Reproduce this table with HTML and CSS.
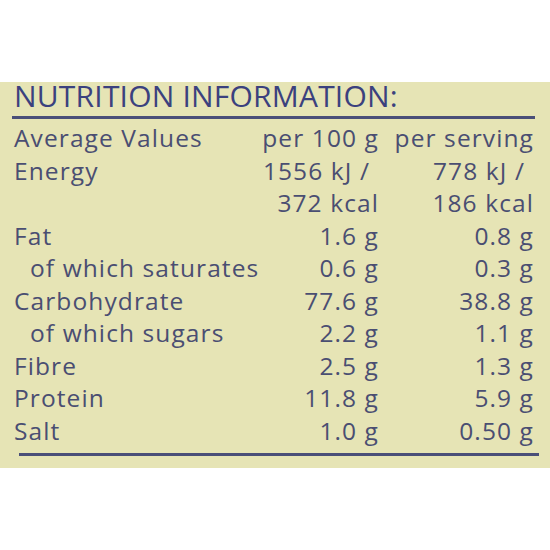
FILE: index.html
```html
<!DOCTYPE html>
<html lang="en">
<head>
  <meta charset="UTF-8"/>
  <title>Nutrition Information</title>
  <link rel="stylesheet" href="styles.css">
</head>
<body>

  <div class="panel">
    <h1 class="title">NUTRITION INFORMATION:</h1>
    <div class="rule top-rule"></div>

    <div class="facts">
      <div class="label">Average Values</div>
      <div class="value">per 100 g</div>
      <div class="value">per serving</div>

      <div class="label">Energy</div>
      <div class="value slash">1556 kJ /</div>
      <div class="value slash">778 kJ /</div>

      <div class="label"></div>
      <div class="value">372 kcal</div>
      <div class="value">186 kcal</div>

      <div class="label">Fat</div>
      <div class="value">1.6 g</div>
      <div class="value">0.8 g</div>

      <div class="label sub">of which saturates</div>
      <div class="value">0.6 g</div>
      <div class="value">0.3 g</div>

      <div class="label">Carbohydrate</div>
      <div class="value">77.6 g</div>
      <div class="value">38.8 g</div>

      <div class="label sub">of which sugars</div>
      <div class="value">2.2 g</div>
      <div class="value">1.1 g</div>

      <div class="label">Fibre</div>
      <div class="value">2.5 g</div>
      <div class="value">1.3 g</div>

      <div class="label">Protein</div>
      <div class="value">11.8 g</div>
      <div class="value">5.9 g</div>

      <div class="label">Salt</div>
      <div class="value">1.0 g</div>
      <div class="value">0.50 g</div>
    </div>

    <div class="rule bottom-rule"></div>
  </div>

</body>
</html>
```

FILE: styles.css
```css
body {
  margin: 0;
  background-color: #ffffff;
  font-family: 'Open Sans', sans-serif;
  color: #4a4e72;
}

.panel {
  margin-top: 82px;
  height: 386px;
  background-color: #e6e4b5;
  padding: 2px 14px 0 14px;
  box-sizing: border-box;
}

.title {
  margin: 0;
  font-size: 30px;
  font-weight: 500;
  line-height: 24px;
  color: #3b417e;
  letter-spacing: 0.2px;
  white-space: nowrap;
}

.rule {
  height: 3px;
  background-color: #4a4f78;
}

.top-rule {
  margin: 8px 1px 0 -2px;
}

.bottom-rule {
  margin: 6px -3px 0 5px;
}

.facts {
  display: grid;
  grid-template-columns: 230px 134px 155px;
  margin-top: 3px;
  font-size: 24.5px;
  line-height: 32.5px;
  letter-spacing: 1.1px;
}

.label {
  white-space: nowrap;
}

.label.sub {
  padding-left: 16px;
}

.value {
  text-align: right;
  white-space: nowrap;
  margin-right: -1px;
}

.value.slash {
  padding-right: 9px;
}
```
